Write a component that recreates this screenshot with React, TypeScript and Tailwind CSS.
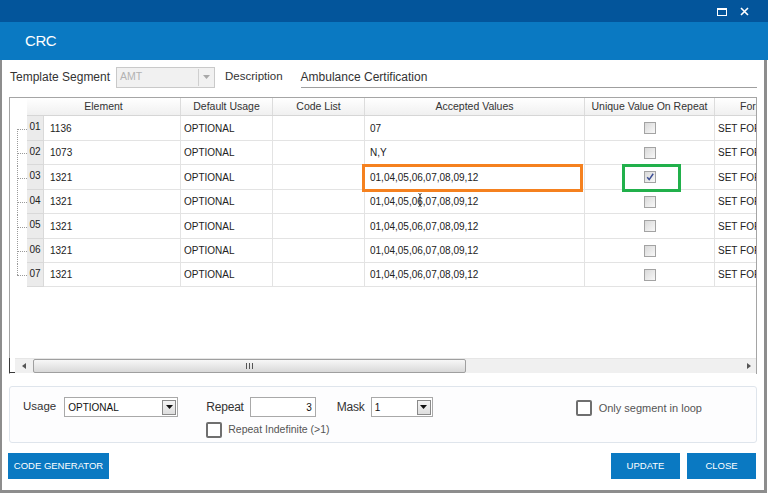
import React from 'react';

const rows = [
  { n: '01', el: '1136', acc: '07', h: 'h-[25px]', checked: false },
  { n: '02', el: '1073', acc: 'N,Y', h: 'h-[24px]', checked: false },
  { n: '03', el: '1321', acc: '01,04,05,06,07,08,09,12', h: 'h-[25px]', checked: true },
  { n: '04', el: '1321', acc: '01,04,05,06,07,08,09,12', h: 'h-[24px]', checked: false },
  { n: '05', el: '1321', acc: '01,04,05,06,07,08,09,12', h: 'h-[25px]', checked: false },
  { n: '06', el: '1321', acc: '01,04,05,06,07,08,09,12', h: 'h-[24px]', checked: false },
  { n: '07', el: '1321', acc: '01,04,05,06,07,08,09,12', h: 'h-[24px]', checked: false },
];

function SmallBox({ checked }: { checked: boolean }) {
  return (
    <div className="w-[12px] h-[12px] border border-[#a3a3a3] bg-gradient-to-br from-[#d9d9d9] to-[#f8f8f8] flex items-center justify-center">
      {checked && (
        <svg width="10" height="10" viewBox="0 0 10 10">
          <path d="M2.2 5.2 L4.2 7.6 L8.2 1.8" fill="none" stroke="#3d4f95" strokeWidth="1.5" />
        </svg>
      )}
    </div>
  );
}

function DropBtn({ disabled }: { disabled?: boolean }) {
  return (
    <div
      className={
        disabled
          ? 'w-[16px] h-[17px] border-l border-[#cfcfcf] flex items-center justify-center'
          : 'w-[14px] h-[15px] border border-[#8a8a8a] bg-gradient-to-b from-[#f4f4f4] to-[#dedede] flex items-center justify-center'
      }
    >
      <svg width="7" height="4" viewBox="0 0 7 4">
        <path d="M0 0 L7 0 L3.5 4 Z" fill={disabled ? '#a8a8a8' : '#111'} />
      </svg>
    </div>
  );
}

export default function App() {
  return (
    <div className="w-[768px] h-[493px] bg-white overflow-hidden flex flex-col [font-family:'Liberation_Sans',Arial,sans-serif] text-[#222]">
      {/* top bar */}
      <div className="h-[22px] bg-[#03559b] flex items-center justify-end pr-[19px] gap-[13px] shrink-0">
        <div className="w-[10px] h-[8px] border border-white border-t-2 mt-[1px]" />
        <svg width="9" height="9" viewBox="0 0 9 9" className="mt-[1px]">
          <path d="M1 1 L8 8 M8 1 L1 8" stroke="white" strokeWidth="1.6" />
        </svg>
      </div>
      <div className="h-[38px] bg-[#0a79c2] flex items-center pl-[25px] shrink-0">
        <span className="text-white text-[15px] tracking-[-0.4px]">CRC</span>
      </div>

      {/* body */}
      <div className="w-[767px] flex-1 flex flex-col border-l-2 border-r-[3px] border-b-[3px] border-[#8d8d8d] px-[7px] pt-[6px]">
        {/* template row */}
        <div className="h-[22px] flex items-center pl-[1px]">
          <span className="text-[12px] text-[#333]">Template Segment</span>
          <div className="ml-[6px] w-[99px] h-[21px] border border-[#c9c9c9] bg-[#f1f1f1] flex items-center justify-between">
            <span className="pl-[3px] text-[10.5px] text-[#b3b3b3]">AMT</span>
            <DropBtn disabled />
          </div>
          <span className="ml-[10px] text-[11.5px] text-[#333]">Description</span>
          <div className="ml-[18px] flex-1 h-[22px] border-b border-[#9f9f9f] flex items-center">
            <span className="text-[12px] text-[#333]">Ambulance Certification</span>
          </div>
        </div>

        {/* grid */}
        <div className="mt-[9px] h-[277px] border-t border-l border-r border-[#a5a5a5] flex flex-col relative">
          {/* header */}
          <div className="h-[18px] flex text-[10.5px] text-[#333] shrink-0">
            <div className="w-[17px] shrink-0" />
            <div className="flex flex-1 min-w-0 bg-gradient-to-b from-[#ffffff] to-[#f0f0f0] border-b border-[#d6d6d6] overflow-hidden">
              <div className="w-[154px] shrink-0 border-r border-[#dcdcdc] flex items-center justify-center">Element</div>
              <div className="w-[92px] shrink-0 border-r border-[#dcdcdc] flex items-center justify-center">Default Usage</div>
              <div className="w-[92px] shrink-0 border-r border-[#dcdcdc] flex items-center justify-center">Code List</div>
              <div className="w-[220px] shrink-0 border-r border-[#dcdcdc] flex items-center justify-center">Accepted Values</div>
              <div className="w-[130px] shrink-0 border-r border-[#dcdcdc] flex items-center justify-center">Unique Value On Repeat</div>
              <div className="flex-1 min-w-0 flex items-center pl-[25px] whitespace-nowrap overflow-hidden">Format</div>
            </div>
          </div>

          {/* rows */}
          {rows.map((r, i) => (
            <div key={r.n} className={`flex ${r.h} text-[10px] text-[#222] shrink-0`}>
              <div className="w-[17px] shrink-0 h-full relative">
                <div className="absolute left-[7px] right-0 top-1/2 border-t border-dotted border-[#9a9a9a]" />
                {i === 0 && <div className="absolute left-[7px] top-1/2 -bottom-px border-l border-dotted border-[#9a9a9a]" />}
                {i > 0 && i < rows.length - 1 && <div className="absolute left-[7px] top-0 -bottom-px border-l border-dotted border-[#9a9a9a]" />}
                {i === rows.length - 1 && <div className="absolute left-[7px] top-0 h-1/2 border-l border-dotted border-[#9a9a9a]" />}
              </div>
              <div className="w-[17px] shrink-0 h-full bg-[#ebebeb] border-b border-r border-[#d9d9d9] flex justify-center pt-[3px]">{r.n}</div>
              <div className="w-[137px] shrink-0 h-full border-b border-r border-[#e3e3e3] flex items-center pl-[6px]">{r.el}</div>
              <div className="w-[92px] shrink-0 h-full border-b border-r border-[#e3e3e3] flex items-center pl-[3px]">OPTIONAL</div>
              <div className="w-[92px] shrink-0 h-full border-b border-r border-[#e3e3e3]" />
              <div className="w-[220px] shrink-0 h-full border-b border-r border-[#e3e3e3] flex items-center pl-[5px] relative">
                {r.acc}
                {i === 2 && (
                  <div className="absolute left-[-3px] top-[-1px] w-[221px] h-[28px] border-[3px] border-[#f5811f] z-10" />
                )}
                {i === 3 && (
                  <svg width="5" height="14" viewBox="0 0 5 14" className="absolute left-[53px] top-[3px]">
                    <path d="M0.5 0.5 L2 1.5 L3.5 0.5 M2 1.5 L2 12.5 M0.5 13.5 L2 12.5 L3.5 13.5" fill="none" stroke="#111" strokeWidth="0.9" />
                  </svg>
                )}
              </div>
              <div className="w-[130px] shrink-0 h-full border-b border-r border-[#e3e3e3] flex items-center justify-center relative">
                <SmallBox checked={r.checked} />
                {i === 2 && (
                  <div className="absolute left-[37px] top-[-1px] w-[59px] h-[28px] border-[3px] border-[#21b04b] z-10" />
                )}
              </div>
              <div className="flex-1 min-w-0 h-full border-b border-[#e3e3e3] flex items-center pl-[3px] whitespace-nowrap overflow-hidden">SET FORMAT</div>
            </div>
          ))}

          <div className="flex-1" />

          {/* scrollbar */}
          <div className="h-[15px] flex shrink-0 mb-px">
            <div className="w-[6px] -ml-px h-full border-l border-b border-[#3a3a3a]" />
            <div className="flex-1 h-full bg-[#f0f0f0] border-t border-[#e6e6e6] flex items-center">
              <div className="w-[18px] h-full flex items-center justify-center">
                <svg width="4" height="6" viewBox="0 0 4 6">
                  <path d="M4 0 L0 3 L4 6 Z" fill="#555" />
                </svg>
              </div>
              <div className="w-[433px] h-[14px] rounded-[2px] border border-[#9f9f9f] bg-gradient-to-b from-[#f7f7f7] to-[#d9d9d9] flex items-center justify-center gap-[2px]">
                <div className="w-px h-[6px] bg-[#555]" />
                <div className="w-px h-[6px] bg-[#555]" />
                <div className="w-px h-[6px] bg-[#555]" />
              </div>
              <div className="flex-1" />
              <div className="w-[14px] h-full flex items-center justify-center">
                <svg width="4" height="6" viewBox="0 0 4 6">
                  <path d="M0 0 L4 3 L0 6 Z" fill="#555" />
                </svg>
              </div>
            </div>
          </div>
        </div>

        {/* bottom panel */}
        <div className="mt-[12px] h-[57px] border border-[#dfe5ec] rounded-[3px] bg-[#fdfdfe] flex items-start pl-[13px] pt-[10px]">
          <div className="h-[20px] flex items-center">
            <span className="text-[11.5px] text-[#333]">Usage</span>
            <div className="ml-[8px] w-[114px] h-[20px] border border-[#a9a9a9] bg-white flex items-center justify-between pr-[1px]">
              <span className="pl-[3px] text-[10px] text-[#111]">OPTIONAL</span>
              <DropBtn />
            </div>
          </div>
          <div className="ml-[28px] flex flex-col">
            <div className="h-[20px] flex items-center">
              <span className="text-[12px] text-[#333] tracking-[-0.2px]">Repeat</span>
              <div className="ml-[6px] w-[66px] h-[20px] border border-[#a9a9a9] bg-white flex items-center justify-end pr-[3px] text-[10px] text-[#111]">3</div>
              <span className="ml-[21px] text-[12px] text-[#333] tracking-[-0.2px]">Mask</span>
              <div className="ml-[6px] w-[62px] h-[20px] border border-[#a9a9a9] bg-white flex items-center justify-between pr-[1px]">
                <span className="pl-[3px] text-[10px] text-[#111]">1</span>
                <DropBtn />
              </div>
            </div>
            <div className="mt-[5px] flex items-center">
              <div className="w-[16px] h-[16px] border-2 border-[#6f6f6f] rounded-[2px] bg-white" />
              <span className="ml-[6px] text-[10.5px] text-[#555]">Repeat Indefinite (&gt;1)</span>
            </div>
          </div>
          <div className="ml-auto mr-[54px] mt-[3px] flex items-center">
            <div className="w-[16px] h-[16px] border-2 border-[#6f6f6f] rounded-[2px] bg-white" />
            <span className="ml-[7px] text-[11px] text-[#555]">Only segment in loop</span>
          </div>
        </div>

        {/* buttons */}
        <div className="mt-[10px] h-[26px] flex -ml-px">
          <div className="w-[101px] h-[26px] bg-[#0a79c2] text-white text-[9.5px] flex items-center justify-center">CODE GENERATOR</div>
          <div className="ml-auto w-[69px] h-[26px] bg-[#0a79c2] text-white text-[9.5px] flex items-center justify-center">UPDATE</div>
          <div className="ml-[7px] mr-px w-[69px] h-[26px] bg-[#0a79c2] text-white text-[9.5px] flex items-center justify-center">CLOSE</div>
        </div>
      </div>
    </div>
  );
}
